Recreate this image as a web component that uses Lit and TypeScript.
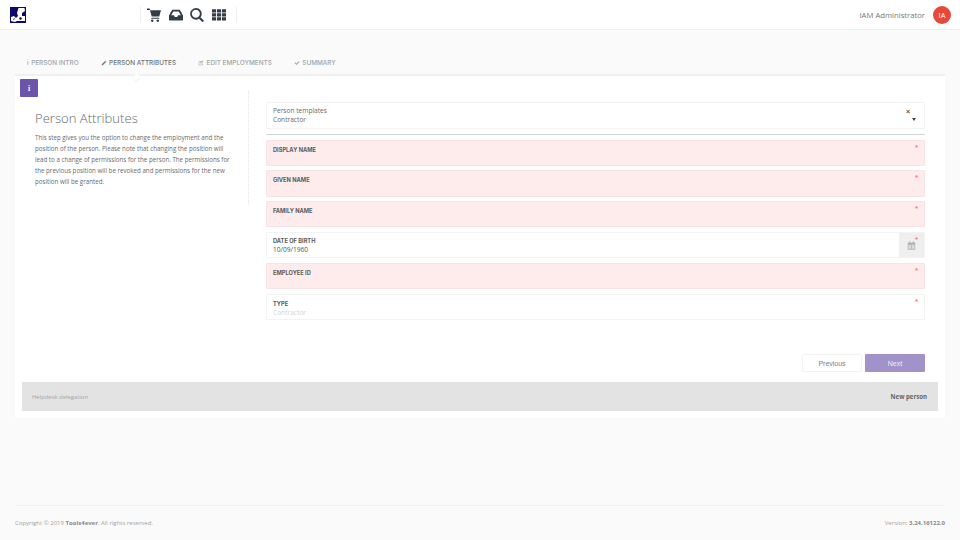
import { LitElement, html, css, svg } from "lit";
import { customElement } from "lit/decorators.js";

interface Field { label: string; value?: string; invalid?: boolean; placeholder?: boolean; date?: boolean; }

const fields: Field[] = [
  { label: "DISPLAY NAME", invalid: true },
  { label: "GIVEN NAME", invalid: true },
  { label: "FAMILY NAME", invalid: true },
  { label: "DATE OF BIRTH", value: "10/09/1960", date: true },
  { label: "EMPLOYEE ID", invalid: true },
  { label: "TYPE", value: "Contractor", placeholder: true },
];

const icon = (d: string, vb = "0 0 24 24") => html`<svg viewBox=${vb} aria-hidden="true">${svg`<path d=${d}></path>`}</svg>`;

const cart = "M0 1h4.500l1 3H24l-3 10.500H8L5 3.500H0zM8 16.500h13v2H7zM9 19.500a2.200 2.200 0 1 0 .01 0zM18.500 19.500a2.200 2.200 0 1 0 .01 0z";
const inbox = "M5.500 3h13l5.500 10v7a1.500 1.500 0 0 1-1.500 1.500h-21A1.500 1.500 0 0 1 0 20v-7zM7.500 6 3.800 12.500H8.500l1.500 3h4l1.500-3h4.700L16.500 6z";
const search = "M10 0a10 10 0 0 1 8 16l6 6-2.500 2.500-6-6A10 10 0 1 1 10 0zm0 3.200a6.800 6.800 0 1 0 .01 0z";
const grid = "M0 2h7v5.500H0zM8.500 2h7v5.500h-7zM17 2h7v5.500h-7zM0 9h7v5.500H0zM8.500 9h7v5.500h-7zM17 9h7v5.500h-7zM0 16h7v5.500H0zM8.500 16h7v5.500h-7zM17 16h7v5.500h-7z";

@customElement("app-root")
export class AppRoot extends LitElement {
  static styles = css`
    :host { display: block; width: 960px; height: 540px; background: #fafafa; font-family: "Open Sans", "Liberation Sans", sans-serif; color: #676a6c; overflow: hidden; }
    svg { display: block; fill: currentColor; }
    .header { height: 29px; background: #fff; border-bottom: 1px solid #f0f0f0; display: flex; align-items: center; padding: 0 9px 0 10px; }
    .logo { width: 16px; height: 16px; margin-top: 1px; }
    .tools { margin-left: 114px; height: 16px; width: 89px; display: flex; align-items: center; gap: 7.500px; padding-left: 6px; border-left: 1px solid #eee; border-right: 1px solid #eee; color: #333d47; margin-top: 1px; }
    .tools svg { width: 14px; height: 14px; margin-top: -1px; }
    .user { margin-left: auto; display: flex; align-items: center; gap: 8px; font-size: 7.700px; color: #777; margin-top: 1px; }
    .avatar { width: 18px; height: 18px; border-radius: 50%; background: #e8483a; color: #fff; font-size: 7.500px; display: flex; align-items: center; justify-content: center; }
    .tabs { display: flex; height: 44px; padding: 0 0 0 27px; gap: 22px; align-items: flex-end; }
    .tab { display: flex; align-items: center; gap: 2.500px; font-family: "Inter", "Liberation Sans", sans-serif; font-size: 6.400px; font-weight: 500; color: #a2a4a6; padding-bottom: 7px; line-height: 8px; white-space: nowrap; }
    .tab.active { color: #6f7274; }
    .tab svg { width: 6px; height: 6px; }
    .panel { position: relative; margin: 0 15px; height: 342px; background: #fff; border-top: 2px solid #f0f0f0; padding: 0 7px; }
    .caret { position: absolute; left: 117px; top: -1px; width: 8px; height: 8px; background: #fff; border-right: 1px solid #eee; border-bottom: 1px solid #eee; transform: rotate(45deg) scale(.7); margin-top: -2px; }
    .info { position: absolute; left: 5px; top: 3px; width: 18px; height: 18px; border-radius: 1px; background: #6b55ab; color: #fff; display: flex; align-items: center; justify-content: center; font: 700 8px "Liberation Serif", serif; }
    .columns { display: flex; height: 278px; }
    .left { width: 227px; height: 114px; margin-top: 15px; padding: 16px 14px 0 13px; box-sizing: border-box; border-right: 1px dotted #e6e6e6; flex: none; }
    h2 { margin: 0 0 2.500px; font-size: 13.100px; font-weight: 300; color: #676a6c; line-height: 22px; white-space: nowrap; }
    p { margin: 0; font-size: 6.200px; line-height: 11px; color: #676a6c; white-space: nowrap; }
    .right { margin-left: 17px; width: 659px; padding-top: 26px; }
    .box { position: relative; box-sizing: border-box; border: 1px solid #f3f3f3; border-radius: 1px; background: #fff; padding: 5px 6px; }
    .template { height: 27px; padding-top: 4px; font-size: 6.600px; line-height: 8.500px; color: #676a6c; }
    .clear { position: absolute; right: 14px; top: 5px; font: 700 7px/8px "Liberation Sans", sans-serif; color: #555; }
    .arrow { position: absolute; right: 8px; top: 15px; border: 2.500px solid transparent; border-top: 3px solid #444; border-bottom: 0; }
    hr { margin: 5px 0 4.600px; border: 0; border-top: 1px solid #d4d4d4; }
    .fields { display: flex; flex-direction: column; gap: 4.600px; }
    .field { height: 26.200px; }
    .field.date { padding-top: 4px; }
    .field.invalid { background: #feecec; border-color: #f8e4e4; }
    .label { font-family: "Inter", "Liberation Sans", sans-serif; font-size: 5.700px; font-weight: 700; line-height: 8px; color: #5a5c5e; }
    .value { font-size: 6.600px; line-height: 9px; color: #555; }
    .value.ph { color: #d4d4d4; }
    .req { position: absolute; right: 6px; top: 3px; color: #f77; font: 700 8px/8px "Liberation Sans", sans-serif; z-index: 1; }
    .cal { position: absolute; right: 0; top: 0; bottom: 0; width: 25px; background: #efefef; color: #b5b5b5; display: flex; align-items: center; justify-content: center; }
    .cal svg { width: 9px; height: 9px; }
    .actions { display: flex; justify-content: flex-end; gap: 3px; height: 18px; padding-right: 13px; }
    .btn { width: 60px; height: 18px; box-sizing: border-box; display: flex; align-items: center; justify-content: center; font: 7px "Liberation Sans", sans-serif; border-radius: 1px; }
    .prev { background: #fff; border: 1px solid #f3f3f3; color: #7b7e85; }
    .next { background: #a193c9; color: #eee; }
    .crumb { margin-top: 10px; height: 29px; background: #e3e3e3; display: flex; align-items: center; justify-content: space-between; padding: 0 11px 0 10px; font-size: 5.900px; color: #a5a5a5; }
    .crumb b { color: #666; font-weight: 700; font-size: 6.100px; }
    .footer { margin: 87px 15px 0; border-top: 1px solid #f1f1f1; padding-top: 13px; display: flex; justify-content: space-between; font-size: 6px; line-height: 9px; color: #a2a2a2; }
    .footer b { color: #8a8a8a; }
  `;

  render() {
    return html`
      <div class="header">
        <svg class="logo" viewBox="0 0 16 16">
          <rect width="16" height="16" fill="#0b0a66"></rect>
          <path fill="#fff" d="M8.500 1h6l.5 3-3 2v3h3v5H7l-2 1-4-1v-4l3-1 2 2 2-2-1-3z"></path>
          <path fill="#0b0a66" d="M9 11l2-1 1 2-2 1zM4 11l1 1-2 1z"></path>
        </svg>
        <div class="tools">${icon(cart)}${icon(inbox)}${icon(search)}${icon(grid)}</div>
        <div class="user">IAM Administrator <span class="avatar">IA</span></div>
      </div>
      <div class="tabs">
        <div class="tab"><span>i</span> PERSON INTRO</div>
        <div class="tab active">${icon("M3 17 16 4l4 4L7 21H3zM18 2l4 4-1 1-4-4z")} PERSON ATTRIBUTES</div>
        <div class="tab">${icon("M3 5h11v2H5v12h12v-6h2v8H3zM9 11 19 2l3 3-10 9H9z")} EDIT EMPLOYMENTS</div>
        <div class="tab">${icon("M2 12l3-3 5 5L20 4l3 3-13 13z")} SUMMARY</div>
      </div>
      <div class="panel">
        <div class="caret"></div>
        <div class="info">i</div>
        <div class="columns">
          <div class="left">
            <h2>Person Attributes</h2>
            <p>This step gives you the option to change the employment and the<br>position of the person. Please note that changing the position will<br>lead to a change of permissions for the person. The permissions for<br>the previous position will be revoked and permissions for the new<br>position will be granted.</p>
          </div>
          <div class="right">
            <div class="box template">
              Person templates<br>Contractor
              <span class="clear">×</span><span class="arrow"></span>
            </div>
            <hr>
            <div class="fields">
              ${fields.map((f) => html`
                <div class="box field ${f.invalid ? "invalid" : ""} ${f.date ? "date" : ""}">
                  <div class="label">${f.label}</div>
                  ${f.value ? html`<div class="value ${f.placeholder ? "ph" : ""}">${f.value}</div>` : ""}
                  ${f.date ? html`<div class="cal">${icon("M2 4h4V1h3v3h6V1h3v3h4v19H2zM4 11v3.500h7V11zM13 11v3.500h7V11zM4 16.500V20h7v-3.500zM13 16.500V20h7v-3.500z")}</div>` : ""}
                  <span class="req">*</span>
                </div>`)}
            </div>
          </div>
        </div>
        <div class="actions">
          <div class="btn prev">Previous</div>
          <div class="btn next">Next</div>
        </div>
        <div class="crumb"><span>Helpdesk delegation</span><b>New person</b></div>
      </div>
      <div class="footer">
        <span>Copyright © 2019 <b>Tools4ever</b>. All rights reserved.</span>
        <span>Version: <b>3.24.16122.0</b></span>
      </div>
    `;
  }
}
